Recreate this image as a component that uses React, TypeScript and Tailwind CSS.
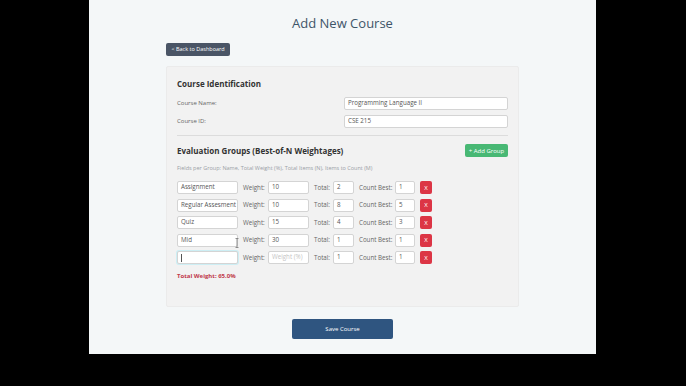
import React from "react";

const rows = [
  { name: "Assignment", weight: "10", total: "2", best: "1" },
  { name: "Regular Assesment", weight: "10", total: "8", best: "5" },
  { name: "Quiz", weight: "15", total: "4", best: "3" },
  { name: "Mid", weight: "30", total: "1", best: "1" },
  { name: "", weight: "", total: "1", best: "1", focus: true },
];

const inputCls =
  "h-[13px] bg-white border border-[#d4d4d4] rounded-[2px] px-[3px] flex items-center text-[6.2px] text-[#555] leading-none whitespace-nowrap overflow-hidden";

export default function App() {
  return (
    <div
      className="w-[686px] h-[386px] bg-black overflow-hidden"
      style={{ fontFamily: '"Open Sans", "Noto Sans", sans-serif' }}
    >
      <div className="ml-[89px] w-[507px] h-[354px] bg-[#f4f7f8] flex flex-col items-start pl-[77px] relative">
        <div className="w-[353px] mt-[15px] text-center text-[13px] leading-[16px] text-[#3e5568]">
          Add New Course
        </div>
        <div className="mt-[12px] h-[13px] w-[64px] bg-[#4a5566] rounded-[2px] text-white text-[5.5px] flex items-center justify-center leading-none whitespace-nowrap">
          &lt; Back to Dashboard
        </div>
        <div className="mt-[10px] w-[353px] h-[241px] bg-[#f2f2f2] border border-[#ebebeb] rounded-[2px] px-[10px] pt-[12px] flex flex-col">
          <div className="text-[8px] leading-[10px] font-bold text-[#333]">Course Identification</div>
          <div className="mt-[8px] flex items-center justify-between h-[13px]">
            <span className="text-[6px] text-[#666]">Course Name:</span>
            <div className={inputCls + " w-[164px]"}>Programming Language II</div>
          </div>
          <div className="mt-[5px] flex items-center justify-between h-[13px]">
            <span className="text-[6px] text-[#666]">Course ID:</span>
            <div className={inputCls + " w-[164px]"}>CSE 215</div>
          </div>
          <div className="mt-[7px] border-t border-[#dcdcdc]" />
          <div className="mt-[8px] flex items-center justify-between h-[13px]">
            <span className="text-[8px] font-bold text-[#333]">Evaluation Groups (Best-of-N Weightages)</span>
            <div className="h-[13px] w-[43px] bg-[#48b874] rounded-[2px] text-white text-[6px] flex items-center justify-center leading-none whitespace-nowrap">
              + Add Group
            </div>
          </div>
          <div className="mt-[7px] text-[5.5px] leading-[8px] text-[#9aa0a6] whitespace-nowrap">
            Fields per Group: Name, Total Weight (%), Total Items (N), Items to Count (M)
          </div>
          <div className="mt-[9px] flex flex-col gap-[4.5px]">
            {rows.map((r, i) => (
              <div key={i} className="flex items-center h-[13px] text-[6.2px] text-[#666] whitespace-nowrap">
                <div
                  className={
                    inputCls +
                    " w-[61px] " +
                    (r.focus ? "border-[#8fcfdc] shadow-[0_0_0_1px_#cdeef4]" : "")
                  }
                >
                  {r.focus ? <span className="w-[1px] h-[8px] bg-[#555]" /> : r.name}
                </div>
                <span className="ml-[5px] w-[25px]">Weight:</span>
                <div className={inputCls + " w-[41px]"}>
                  {r.weight ? r.weight : <span className="text-[#c4c4c4]">Weight (%)</span>}
                </div>
                <span className="ml-[5px] w-[19px]">Total:</span>
                <div className={inputCls + " w-[21px]"}>{r.total}</div>
                <span className="ml-[5px] w-[36px]">Count Best:</span>
                <div className={inputCls + " w-[20px]"}>{r.best}</div>
                <div className="ml-[5px] w-[12px] h-[13px] bg-[#dc3545] rounded-[2px] text-white text-[6px] flex items-center justify-center leading-none">
                  X
                </div>
              </div>
            ))}
          </div>
          <div className="mt-[8px] text-[6px] font-bold text-[#c0394b] leading-[8px]">Total Weight: 65.0%</div>
        </div>
        <div className="mt-[12px] ml-[126px] w-[101px] h-[20px] bg-[#2f5580] rounded-[2px] text-white text-[6px] flex items-center justify-center">
          Save Course
        </div>
        <svg className="absolute left-[146px] top-[238px]" width="4" height="10" viewBox="0 0 4 10">
          <path d="M0.5 0.5 H3.5 M2 0.5 V9.5 M0.5 9.5 H3.5" stroke="#777" strokeWidth="0.8" fill="none" />
        </svg>
      </div>
    </div>
  );
}
